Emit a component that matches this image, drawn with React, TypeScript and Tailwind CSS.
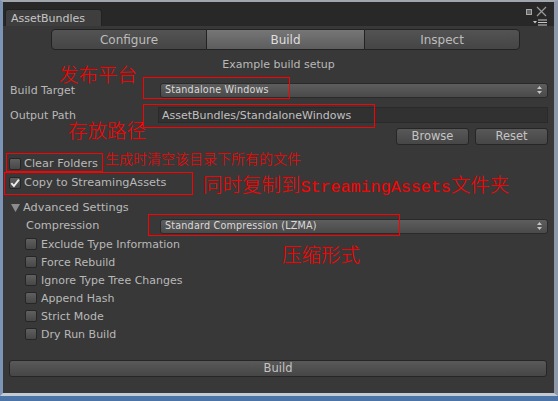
import React from "react";

const Checkbox = ({ checked = false }: { checked?: boolean }) => (
  <div className="w-[12px] h-[12px] shrink-0 rounded-[2px] border border-[#262626] bg-linear-to-b from-[#606060] to-[#474747] flex items-center justify-center">
    {checked && (
      <svg width="10" height="10" viewBox="0 0 10 10">
        <path d="M1.3 5.2 L3.9 8 L8.9 1.6" stroke="#ececec" strokeWidth="1.9" fill="none" />
      </svg>
    )}
  </div>
);

const Arrows = () => (
  <svg width="5" height="8" viewBox="0 0 5 8" className="shrink-0">
    <path d="M2.5 0 L5 3 H0 Z M0 5 H5 L2.5 8 Z" fill="#c4c4c4" />
  </svg>
);

const Dropdown = ({ text }: { text: string }) => (
  <div className="flex-1 h-[15px] rounded-[3px] border border-[#2a2a2a] bg-linear-to-b from-[#5d5d5d] to-[#4a4a4a] flex items-center pl-[4px] pr-[5px] text-[9.6px] text-[#dadada] tracking-[0.2px]">
    <span className="flex-1 leading-none">{text}</span>
    <Arrows />
  </div>
);

const CheckRow = ({ label }: { label: string }) => (
  <div className="mt-[2px] h-[16px] flex items-center pl-[22px] gap-[4px]">
    <Checkbox />
    <span className="leading-none">{label}</span>
  </div>
);

const Btn = ({ text, w }: { text: string; w: string }) => (
  <div className={`${w} h-[17px] rounded-[3px] border border-[#262626] bg-linear-to-b from-[#585858] to-[#464646] flex items-center justify-center text-[11.5px] text-[#c4c4c4] leading-none`}>
    {text}
  </div>
);

const RedBox = ({ l, t, w, h }: { l: number; t: number; w: number; h: number }) => (
  <div className="absolute border border-[#ff0000]" style={{ left: l, top: t, width: w, height: h }} />
);

const RedText = ({ l, t, size, children }: { l: number; t: number; size: number; children: React.ReactNode }) => (
  <div
    className="absolute whitespace-nowrap leading-none font-light text-[#ff0000] font-['Noto_Sans_CJK_SC',sans-serif]"
    style={{ left: l, top: t, fontSize: size }}
  >
    {children}
  </div>
);

export default function App() {
  return (
    <div className="w-[558px] h-[401px] relative overflow-hidden bg-[#4d74a6] font-['DejaVu_Sans','Liberation_Sans',sans-serif] text-[11px] text-[#b8b8b8]">
      <div className="h-[396px] flex flex-col border-t-2 border-t-[#a0a6ac] border-l-[3px] border-l-[#7c95b6] border-r-[4px] border-r-[#8d99a8] border-b-[3px] border-b-[#c2cad4]">
        {/* tab bar */}
        <div className="h-[24px] bg-[#282828] flex shrink-0">
          <div className="ml-[2px] mt-[7px] w-[97px] h-[17px] rounded-t-[3px] bg-[#3e3e3e] border border-b-0 border-[#222] flex items-center pl-[5px] text-[11px] text-[#c6c6c6] leading-none">
            AssetBundles
          </div>
          <div className="ml-auto mr-[7px] pt-[4px] flex flex-col items-end">
            <div className="flex items-center gap-[4px]">
              <div className="w-[6px] h-[6px] border-[1.5px] border-[#a8a8a8] bg-[#666]" />
              <svg width="11" height="11" viewBox="0 0 11 11">
                <path d="M1 1 L10 10 M10 1 L1 10" stroke="#9a9a9a" strokeWidth="1.2" />
              </svg>
            </div>
            <svg width="14" height="7" viewBox="0 0 14 7" className="mt-[2px]">
              <path d="M0 2 H4 L2 4.5 Z" fill="#c8c8c8" />
              <path d="M5 1 H14 M5 3.5 H14 M5 6 H14" stroke="#c8c8c8" strokeWidth="1.2" />
            </svg>
          </div>
        </div>

        {/* content */}
        <div className="flex-1 bg-[#383838] flex flex-col">
          {/* toolbar */}
          <div className="mt-[3px] ml-[48px] flex h-[21px] text-[12px] leading-none">
            <div className="w-[156px] rounded-l-[4px] border border-[#222] bg-linear-to-b from-[#535353] to-[#454545] flex items-center justify-center text-[#bcbcbc]">
              Configure
            </div>
            <div className="w-[157px] border-y border-[#222] bg-linear-to-b from-[#767676] to-[#5d5d5d] flex items-center justify-center text-[#dedede]">
              Build
            </div>
            <div className="w-[156px] rounded-r-[4px] border border-[#222] bg-linear-to-b from-[#535353] to-[#454545] flex items-center justify-center text-[#bcbcbc]">
              Inspect
            </div>
          </div>

          <div className="mt-[7px] h-[14px] flex items-center justify-center leading-none">Example build setup</div>

          {/* Build target */}
          <div className="mt-[11px] h-[16px] flex items-center pl-[7px] pr-[6px]">
            <span className="w-[150px] leading-none">Build Target</span>
            <Dropdown text="Standalone Windows" />
          </div>

          {/* Output path */}
          <div className="mt-[9px] h-[16px] flex items-center pl-[7px] pr-[6px]">
            <span className="w-[148px] leading-none">Output Path</span>
            <div className="flex-1 h-[16px] border border-[#2a2a2a] bg-[#313131] flex items-center pl-[3px] text-[#c0c0c0] leading-none">
              AssetBundles/StandaloneWindows
            </div>
          </div>

          {/* Buttons */}
          <div className="mt-[5px] flex justify-end gap-[6px] pr-[6px]">
            <Btn text="Browse" w="w-[73px]" />
            <Btn text="Reset" w="w-[73px]" />
          </div>

          {/* Clear folders */}
          <div className="mt-[11px] h-[16px] flex items-center pl-[6px] gap-[3px]">
            <Checkbox />
            <span className="leading-none text-[11.3px]">Clear Folders</span>
          </div>
          <div className="mt-[3px] h-[16px] flex items-center pl-[6px] gap-[3px]">
            <Checkbox checked />
            <span className="leading-none text-[11.3px]">Copy to StreamingAssets</span>
          </div>

          {/* Advanced */}
          <div className="mt-[9px] h-[16px] flex items-center pl-[8px] gap-[3px]">
            <svg width="9" height="8" viewBox="0 0 9 8">
              <path d="M0 0 H9 L4.5 8 Z" fill="#8c8c8c" />
            </svg>
            <span className="leading-none text-[11.3px]">Advanced Settings</span>
          </div>

          <div className="mt-[2px] h-[16px] flex items-center pl-[23px] pr-[6px]">
            <span className="w-[134px] leading-none text-[11.3px]">Compression</span>
            <Dropdown text="Standard Compression (LZMA)" />
          </div>

          <CheckRow label="Exclude Type Information" />
          <CheckRow label="Force Rebuild" />
          <CheckRow label="Ignore Type Tree Changes" />
          <CheckRow label="Append Hash" />
          <CheckRow label="Strict Mode" />
          <CheckRow label="Dry Run Build" />

          <div className="mt-[18px] ml-[6px] mr-[7px] h-[17px] rounded-[3px] border border-[#262626] bg-linear-to-b from-[#595959] to-[#464646] flex items-center justify-center text-[11.5px] text-[#c4c4c4] leading-none">
            Build
          </div>
        </div>
      </div>

      {/* Annotations */}
      <RedBox l={143} t={77} w={147} h={22} />
      <RedBox l={143} t={104} w={232} h={24} />
      <RedBox l={6} t={153} w={97} h={19} />
      <RedBox l={4} t={172} w={189} h={23} />
      <RedBox l={148} t={214} w={252} h={22} />

      <RedText l={59} t={64} size={19.5}>发布平台</RedText>
      <RedText l={68} t={120} size={19.5}>存放路径</RedText>
      <RedText l={105} t={151} size={14}>生成时清空该目录下所有的文件</RedText>
      <RedText l={203} t={174} size={19.5}>
        同时复制到<span className="font-['Liberation_Mono',monospace] text-[16.7px]">StreamingAssets</span>文件夹
      </RedText>
      <RedText l={282} t={244} size={19.5}>压缩形式</RedText>
    </div>
  );
}
